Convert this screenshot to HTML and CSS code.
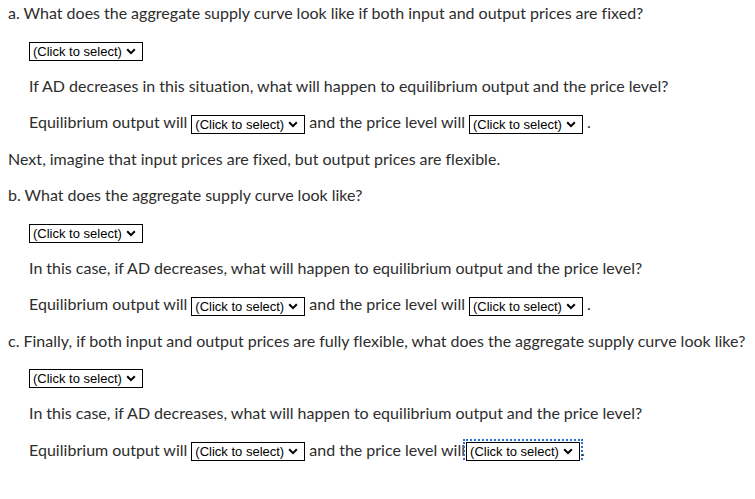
FILE: index.html
```html
<!DOCTYPE html>
<html>
<head>
<meta charset="utf-8">
<link rel="stylesheet" href="styles.css">
</head>
<body>
<div class="q">
  <div class="row">a. What does the aggregate supply curve look like if both input and output prices are fixed?</div>
  <div class="row ind"><select class="sel"><option>(Click to select)</option></select></div>
  <div class="row ind">If AD decreases in this situation, what will happen to equilibrium output and the price level?</div>
  <div class="row ind">Equilibrium output will <select class="sel"><option>(Click to select)</option></select> and the price level will <select class="sel"><option>(Click to select)</option></select> .</div>
  <div class="row">Next, imagine that input prices are fixed, but output prices are flexible.</div>
  <div class="row">b. What does the aggregate supply curve look like?</div>
  <div class="row ind"><select class="sel"><option>(Click to select)</option></select></div>
  <div class="row ind">In this case, if AD decreases, what will happen to equilibrium output and the price level?</div>
  <div class="row ind">Equilibrium output will <select class="sel"><option>(Click to select)</option></select> and the price level will <select class="sel"><option>(Click to select)</option></select> .</div>
  <div class="row">c. Finally, if both input and output prices are fully flexible, what does the aggregate supply curve look like?</div>
  <div class="row ind"><select class="sel"><option>(Click to select)</option></select></div>
  <div class="row ind">In this case, if AD decreases, what will happen to equilibrium output and the price level?</div>
  <div class="row ind">Equilibrium output will <select class="sel"><option>(Click to select)</option></select> and the price level will<span class="focus"><select class="sel"><option>(Click to select)</option></select></span>.</div>
</div>
</body>
</html>
```
FILE: styles.css
```css
html, body {
  margin: 0;
  padding: 0;
  background: #fff;
}
body {
  font-family: Lato, "Open Sans", sans-serif;
  font-size: 16px;
  color: #2d2d2d;
}
.q {
  display: flex;
  flex-direction: column;
  gap: 14.4px;
  padding: 2px 0 0 8px;
}
.row {
  height: 22px;
  line-height: 22px;
  white-space: nowrap;
  word-spacing: -0.2px;
  letter-spacing: 0.03px;
}
.ind {
  padding-left: 21px;
}
.sel {
  appearance: none;
  -webkit-appearance: none;
  font-family: "Liberation Sans", Arial, sans-serif;
  font-size: 13px;
  word-spacing: 0;
  letter-spacing: 0;
  color: #000;
  width: 114px;
  height: 19px;
  margin: 0;
  padding: 0 0 0 3px;
  border: 1px solid #000;
  border-radius: 0;
  background: #fff url("data:image/svg+xml,%3Csvg xmlns='http://www.w3.org/2000/svg' width='10' height='7' viewBox='0 0 10 7'%3E%3Cpath d='M1.2 1.3l3.8 3.8l3.8-3.8' fill='none' stroke='%23000' stroke-width='2'/%3E%3C/svg%3E") no-repeat right 6px center;
  vertical-align: middle;
}
.focus {
  display: inline-block;
  outline: 2px dotted #2a6fd6;
  outline-offset: 0;
  padding: 1px;
  line-height: 0;
  vertical-align: middle;
}
```
